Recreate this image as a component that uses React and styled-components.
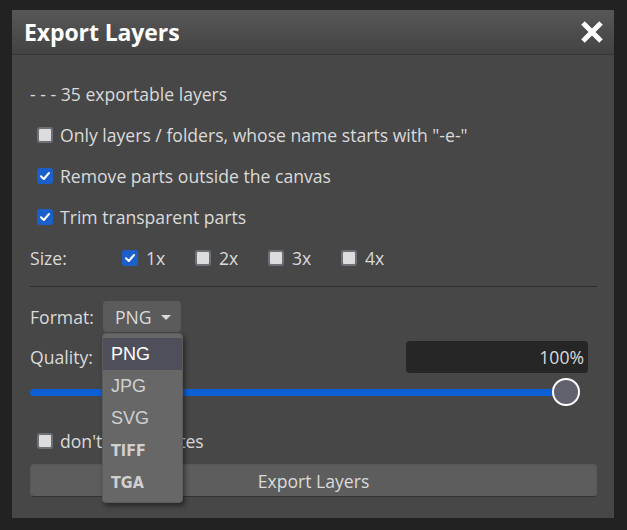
import React, { useState } from 'react'
import styled, { createGlobalStyle } from 'styled-components'

const GlobalStyle = createGlobalStyle`
    body {
        margin: 0;
        background: #222222;
        font-family: "Open Sans", "DejaVu Sans", sans-serif;
    }
`;

const Page = styled.div`
    padding: 10px 13px 12px 12px;
`

const Dialog = styled.div`
    width: 602px;
    height: 508px;
    background: #474747;
    display: flex;
    flex-direction: column;
`

const TitleBar = styled.div`
    height: 44px;
    display: flex;
    align-items: center;
    justify-content: space-between;
    padding: 0 9px 0 12px;
    background: linear-gradient(#575757, #434343);
    border-bottom: 1px solid #363636;
`

const Title = styled.h1`
    margin: 0;
    font-size: 23px;
    font-weight: 700;
    color: #ffffff;
    letter-spacing: -0.1px;
`

const Close = styled.button`
    width: 26px;
    height: 26px;
    padding: 0;
    border: none;
    background: none;
    display: flex;
    align-items: center;
    justify-content: center;
    cursor: pointer;
`

const Body = styled.div`
    padding: 18px 17px 0 18px;
    display: flex;
    flex-direction: column;
    color: #dadada;
    font-size: 17.6px;
`

const Row = styled.div`
    height: ${p => p.h || 41}px;
    margin-top: ${p => p.mt || 0}px;
    padding-left: ${p => p.indent ? 7 : 0}px;
    display: flex;
    align-items: center;
    position: relative;
`

const Label = styled.span`
    width: ${p => p.w}px;
    flex-shrink: 0;
`

const Box = styled.span`
    width: 16px;
    height: 16px;
    box-sizing: border-box;
    border-radius: 3px;
    margin-right: ${p => p.gap || 7}px;
    flex-shrink: 0;
    display: flex;
    align-items: center;
    justify-content: center;
    background: ${p => p.on ? '#1b5fca' : '#dcdcdc'};
    border: ${p => p.on ? 'none' : '2px solid #6f6f7a'};
`

const SizeOption = styled.label`
    width: 73px;
    display: flex;
    align-items: center;
`

const Separator = styled.div`
    margin-top: 8px;
    height: 1px;
    background: #2e2e2e;
`

const Select = styled.div`
    margin-left: 9px;
    height: 31px;
    width: 78px;
    box-sizing: border-box;
    padding: 0 10px 0 12px;
    border-radius: 4px;
    background: #5b5b5b;
    display: flex;
    align-items: center;
    justify-content: space-between;
`

const Caret = styled.span`
    width: 0;
    height: 0;
    border-left: 5px solid transparent;
    border-right: 5px solid transparent;
    border-top: 5px solid #dadada;
    margin-top: 2px;
`

const Menu = styled.ul`
    position: absolute;
    left: 72px;
    top: 32px;
    width: 79px;
    margin: 0;
    padding: 4px 0;
    list-style: none;
    background: #676767;
    border: 1px solid #5c5c5c;
    border-radius: 4px;
    box-shadow: 2px 3px 5px rgba(0, 0, 0, 0.45);
    z-index: 5;
`

const MenuItem = styled.li`
    height: 32px;
    display: flex;
    align-items: center;
    padding-left: 8px;
    background: ${p => p.active ? '#4f4f5b' : 'transparent'};
    color: ${p => p.active ? '#ffffff' : '#d0d0d0'};
    font-family: ${p => p.narrow ? '"DejaVu Sans Condensed", "DejaVu Sans", sans-serif' : '"Liberation Sans", Arial, sans-serif'};
    font-weight: ${p => p.narrow ? 700 : 400};
    font-stretch: ${p => p.narrow ? 'condensed' : 'normal'};
    font-size: ${p => p.narrow ? 16 : 18}px;
`

const ValueBox = styled.div`
    margin-left: auto;
    margin-right: 9px;
    width: 182px;
    height: 32px;
    box-sizing: border-box;
    padding-right: 4px;
    border-radius: 4px;
    background: #262626;
    display: flex;
    align-items: center;
    justify-content: flex-end;
`

const Slider = styled.div`
    width: 550px;
    height: 28px;
    margin-top: 5px;
    position: relative;
    display: flex;
    align-items: center;
`

const Track = styled.div`
    height: 7px;
    border-radius: 4px;
    background: #0c5fd4;
`

const Thumb = styled.div`
    position: absolute;
    top: 0;
    width: 28px;
    height: 28px;
    box-sizing: border-box;
    border-radius: 50%;
    border: 2px solid #ffffff;
    background: #62626f;
`

const ExportButton = styled.button`
    margin-top: 3px;
    height: 33px;
    border: 1px solid #585858;
    border-bottom-color: #333333;
    border-radius: 4px;
    background: #5d5d5d;
    color: #dadada;
    font-family: inherit;
    font-size: 17.6px;
    cursor: pointer;
`

const Check = () => (
    <svg width="12" height="12" viewBox="0 0 12 12">
        <path d="M2 6.3 L4.8 9 L10 3" fill="none" stroke="#ffffff" strokeWidth="2" strokeLinecap="round" strokeLinejoin="round" />
    </svg>
)

const CheckBox = ({ on, gap }) => (
    <Box on={on} gap={gap}>{on && <Check />}</Box>
)

const formats = ['PNG', 'JPG', 'SVG', 'TIFF', 'TGA']

const App = () => {
    const [quality] = useState(100)
    const thumbLeft = (550 - 28) * quality / 100

    return (
        <Page>
            <GlobalStyle />
            <Dialog>
                <TitleBar>
                    <Title>Export Layers</Title>
                    <Close>
                        <svg width="24" height="24" viewBox="0 0 24 24">
                            <path d="M3 3 L21 21 M21 3 L3 21" stroke="#ffffff" strokeWidth="5" />
                        </svg>
                    </Close>
                </TitleBar>
                <Body>
                    <Row>- - - 35 exportable layers</Row>
                    <Row indent><CheckBox />Only layers / folders, whose name starts with "-e-"</Row>
                    <Row indent><CheckBox on />Remove parts outside the canvas</Row>
                    <Row indent><CheckBox on />Trim transparent parts</Row>
                    <Row>
                        <Label w={92}>Size:</Label>
                        {['1x', '2x', '3x', '4x'].map((s, i) => (
                            <SizeOption key={s}><CheckBox on={i === 0} gap={8} />{s}</SizeOption>
                        ))}
                    </Row>
                    <Separator />
                    <Row h={31} mt={14}>
                        <Label w={64}>Format:</Label>
                        <Select>PNG <Caret /></Select>
                        <Menu>
                            {formats.map((f, i) => (
                                <MenuItem key={f} active={i === 0} narrow={i > 2}>{f}</MenuItem>
                            ))}
                        </Menu>
                    </Row>
                    <Row h={32} mt={9}>
                        <Label w={80}>Quality:</Label>
                        <ValueBox>{quality}%</ValueBox>
                    </Row>
                    <Slider>
                        <Track style={{ width: thumbLeft + 14 }} />
                        <Thumb style={{ left: thumbLeft }} />
                    </Slider>
                    <Row mt={14} indent><CheckBox />don't crop sprites</Row>
                    <ExportButton>Export Layers</ExportButton>
                </Body>
            </Dialog>
        </Page>
    )
}

export default App
